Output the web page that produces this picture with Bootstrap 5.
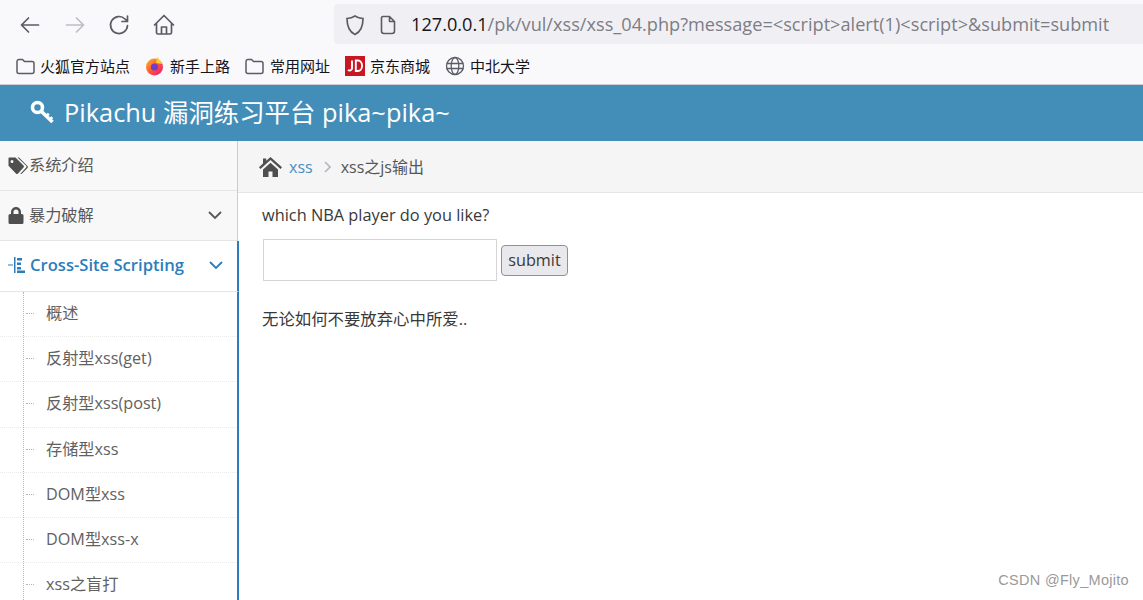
<!DOCTYPE html>
<html lang="zh">
<head>
<meta charset="utf-8">
<title>Pikachu</title>
<link href="https://cdn.jsdelivr.net/npm/bootstrap@5.3.0/dist/css/bootstrap.min.css" rel="stylesheet">
<style>
html,body{height:600px;overflow:hidden;background:#fff}
body{font-family:"Open Sans","Noto Sans CJK SC",sans-serif;font-size:16px;color:#393939;position:relative}
.chrome{background:#f9f9fb;height:85px;border-bottom:1px solid #cfcfd8}
.toolrow{height:50px;padding-left:18px}
.tbtn{width:24px;height:24px;color:#5b5b66;flex:none}
.tbtn.dim{color:#bdbdc3}
.urlbar{position:relative;margin-left:316px;background:#f0f0f4;height:40px;flex:1;border-radius:4px 0 0 4px;margin-top:-2px;padding:2px 0 0 11px;font-size:18.16px;color:#7d7d85;white-space:nowrap}
.tools{position:absolute;left:18px;top:13px;gap:20.5px}
.urlhost{color:#15141a}
.urlic{color:#5b5b66;flex:none}
.bookrow{height:34px;padding-left:16px;gap:15px;font-size:15px;color:#15141a;white-space:nowrap;margin-top:-1px}
.bookrow span.bk{gap:5px}
.bookrow span.bk-wide{gap:6px}
.bookrow span.bk-tail{margin-left:1px}
.topbar{background:#438eb9;height:56px;color:#fff;font-size:25.4px;padding:0 0 2px 30px;gap:9px;white-space:nowrap}
.mainwrap{height:459px;overflow:hidden}
.sidepane{width:238px;flex:none;background:#f2f2f2;position:relative;border-right:1px solid #ccc}
.sideitem{height:50px;border-bottom:1px solid #e5e5e5;background:#f8f8f8;color:#585858;padding:0 15px 0 8px;font-size:16.2px;white-space:nowrap}
.sideitem.openitem{background:#fff;color:#2b7dbc;font-weight:600;font-size:16.6px;margin-right:-2px;border-right:2px solid #2b7dbc;padding-right:14px;height:51px;padding-bottom:2px}
.chev{margin-left:auto;flex:none}
.sublist{background:#fff;margin-right:-2px;border-right:2px solid #2b7dbc;position:relative}
.sublist::before{content:"";position:absolute;left:23px;top:0;bottom:0;border-left:1px dotted #9dbdd6}
.subitem{height:45.2px;padding-left:46px;padding-bottom:2px;font-size:16.2px;color:#616161;border-bottom:1px dotted #eaeaea;position:relative;white-space:nowrap}
.subitem::before{content:"";position:absolute;left:26px;top:21px;width:8px;border-top:1px dotted #9dbdd6}
.contentpane{min-width:0}
.crumbs{height:52px;background:#f5f5f5;border-bottom:1px solid #e5e5e5;padding-left:21px;font-size:16px;color:#555;white-space:nowrap}
.crumbs .xsslink{color:#4c8fbd;margin-left:7px}
.crumbs .sep{color:#b2b6bf;margin:0 10px 0 11px;flex:none}
.pagebody{padding:9px 0 0 24px;color:#393939}
.pagebody p{margin:0;line-height:26px;font-size:16.35px}
.nbafield{width:234px;height:42px;border:1px solid #d5d5d5;background:#fff;margin-left:1px;padding:0}
.nbasubmit{height:31px;width:67px;margin-left:4px;padding:1px 0 0;background:#e9e9ed;border:1px solid #8f8f9d;border-radius:4px;color:#393939;font-size:16.2px;line-height:1}
.formline{margin-top:11px;align-items:center;gap:0}
.pagebody p.msgline{margin-top:25px;font-size:16.4px}
.wmark{position:absolute;right:14px;bottom:8px;font-family:"Liberation Sans",sans-serif;font-size:14.5px;color:#9a9a9a;letter-spacing:.3px}
</style>
</head>
<body>
<div class="chrome">
  <div class="d-flex align-items-center toolrow position-relative">
    <div class="d-flex align-items-center tools">
      <svg class="tbtn" viewBox="0 0 24 24" fill="none" stroke="currentColor" stroke-width="1.7" stroke-linecap="round" stroke-linejoin="round"><path d="M20.500 12H3.500M10.500 5l-7 7 7 7"/></svg>
      <svg class="tbtn dim" viewBox="0 0 24 24" fill="none" stroke="currentColor" stroke-width="1.7" stroke-linecap="round" stroke-linejoin="round"><path d="M3.500 12h17M13.500 5l7 7-7 7"/></svg>
      <svg class="tbtn" viewBox="0 0 24 24" fill="none" stroke="currentColor" stroke-width="1.7" stroke-linecap="round" stroke-linejoin="round"><path d="M20.500 12.500a8.500 8.500 0 1 1-2.500-6.500L20.500 8.500M20.500 3v5.500H15"/></svg>
      <svg class="tbtn" viewBox="0 0 24 24" fill="none" stroke="currentColor" stroke-width="1.7" stroke-linecap="round" stroke-linejoin="round"><path d="M2.500 12 12 2.500l9.500 9.500M4.500 10v9.500A1.500 1.500 0 0 0 6 21h12a1.500 1.500 0 0 0 1.500-1.500V10M9.500 21v-7h5v7"/></svg>
    </div>
    <div class="urlbar d-flex align-items-center">
      <svg class="urlic" width="20" height="22" viewBox="0 0 20 22" fill="none" stroke="currentColor" stroke-width="1.7"><path d="M10 2c2.500 1.600 5 2.300 8 2.500 0 7-1.500 13-8 16C3.500 17.500 2 11.500 2 4.500 5 4.300 7.500 3.600 10 2z"/></svg>
      <svg class="urlic" style="margin-left:15px" width="16" height="20" viewBox="0 0 16 20" fill="none" stroke="currentColor" stroke-width="1.6" stroke-linejoin="round"><path d="M3 1.500h6.500l5 5V16a2.500 2.500 0 0 1-2.500 2.500H4A2.500 2.500 0 0 1 1.500 16V3A1.500 1.500 0 0 1 3 1.500zM9.500 1.500V6.500h5"/></svg>
      <span style="margin-left:15px"><span class="urlhost">127.0.0.1</span>/pk/vul/xss/xss_04.php?message=&lt;script&gt;alert(1)&lt;script&gt;&amp;submit=submit</span>
    </div>
  </div>
  <div class="d-flex align-items-center bookrow">
    <span class="d-flex align-items-center bk">
      <svg width="19" height="17" viewBox="0 0 19 17" fill="none" stroke="#5b5b66" stroke-width="1.5"><path d="M1 3.500A2 2 0 0 1 3 1.500h3.500l2 2H16a2 2 0 0 1 2 2V13.500a2 2 0 0 1-2 2H3a2 2 0 0 1-2-2z"/></svg>火狐官方站点</span>
    <span class="d-flex align-items-center bk bk-wide">
      <svg width="19" height="20" viewBox="0 0 19 20"><defs><linearGradient id="ffx" x1="0" y1="0" x2="1" y2="1"><stop offset="0" stop-color="#ffbd2e"/><stop offset=".5" stop-color="#ff5634"/><stop offset="1" stop-color="#e31587"/></linearGradient></defs><circle cx="9.500" cy="11" r="8.500" fill="url(#ffx)"/><path d="M12 1c2 2 4 4 5 7l-6-1z" fill="#ffcb2e"/><circle cx="9.500" cy="11" r="3.600" fill="#6b3fc9"/></svg>新手上路</span>
    <span class="d-flex align-items-center bk bk-wide">
      <svg width="19" height="17" viewBox="0 0 19 17" fill="none" stroke="#5b5b66" stroke-width="1.5"><path d="M1 3.500A2 2 0 0 1 3 1.500h3.500l2 2H16a2 2 0 0 1 2 2V13.500a2 2 0 0 1-2 2H3a2 2 0 0 1-2-2z"/></svg>常用网址</span>
    <span class="d-flex align-items-center bk">
      <svg width="20" height="20" viewBox="0 0 20 20"><rect width="20" height="20" fill="#c91623"/><path d="M7 4.500V12.500a2.500 2.500 0 0 1-4 1.500M10.800 4.500V15h2.200a4 5.200 0 0 0 0-10.500z" fill="none" stroke="#fff" stroke-width="1.900"/></svg>京东商城</span>
    <span class="d-flex align-items-center bk">
      <svg width="20" height="20" viewBox="0 0 20 20" fill="none" stroke="#5b5b66" stroke-width="1.300"><circle cx="10" cy="10" r="8.500"/><ellipse cx="10" cy="10" rx="3.800" ry="8.500"/><path d="M1.500 7.500h17M1.500 12.500h17"/></svg>中北大学</span>
  </div>
</div>
<div class="topbar d-flex align-items-center">
  <svg width="25" height="25" viewBox="0 0 25 25" fill="none"><circle cx="7.500" cy="7.500" r="5" stroke="#fff" stroke-width="3.600"/><path d="M11.500 11.500 22.500 22" stroke="#fff" stroke-width="3.600"/><path d="M16 16.500l2.800-2.800M19.500 20l2.800-2.800" stroke="#fff" stroke-width="2.600"/></svg>
  <span>Pikachu 漏洞练习平台 pika~pika~</span>
</div>
<div class="d-flex mainwrap">
  <aside class="sidepane">
    <div class="sideitem d-flex align-items-center">
      <svg width="21" height="18" viewBox="0 0 21 17" fill="#4f4f4f"><path fill-rule="evenodd" d="M1 0h6.500l8 8a1.500 1.500 0 0 1 0 2.100l-5.500 6a1.500 1.500 0 0 1-2.100 0L.5 8.200V1a1 1 0 0 1 .5-1zM4 2.500a1.500 1.500 0 1 0 0 3 1.500 1.500 0 0 0 0-3z"/><path d="M9.500 0H11l8.500 8.500a1.500 1.500 0 0 1 0 2L13.500 16.500h-1.300l6-6.500a1.200 1.200 0 0 0 0-1.700z"/></svg>
      <span>系统介绍</span>
    </div>
    <div class="sideitem d-flex align-items-center">
      <svg width="16" height="17" viewBox="0 0 16 17" fill="#4f4f4f"><path d="M3 7V5a5 5 0 0 1 10 0v2h1a1.500 1.500 0 0 1 1.500 1.500v7A1.500 1.500 0 0 1 14 17H2A1.500 1.500 0 0 1 .5 15.500v-7A1.500 1.500 0 0 1 2 7zm2.500 0h5V5a2.500 2.500 0 0 0-5 0z"/></svg>
      <span style="margin-left:5px">暴力破解</span>
      <svg class="chev" width="14" height="9" viewBox="0 0 14 9" fill="none" stroke="#585858" stroke-width="1.800"><path d="M1 1l6 6 6-6"/></svg>
    </div>
    <div class="sideitem openitem d-flex align-items-center">
      <svg width="18" height="16" viewBox="0 0 18 16" fill="#2b7dbc"><path d="M0 7.500h5v1H0zM6 0h1.500v16H6zM9 1h5v2.500H9zM9 5.500h4v2.500H9zM9 10h4v2.500H9zM9 13.500h8V16H9z"/></svg>
      <span style="margin-left:4px">Cross-Site Scripting</span>
      <svg class="chev" width="14" height="9" viewBox="0 0 14 9" fill="none" stroke="#2b7dbc" stroke-width="1.800"><path d="M1 1l6 6 6-6"/></svg>
    </div>
    <div class="sublist">
      <div class="subitem d-flex align-items-center">概述</div>
      <div class="subitem d-flex align-items-center">反射型xss(get)</div>
      <div class="subitem d-flex align-items-center">反射型xss(post)</div>
      <div class="subitem d-flex align-items-center">存储型xss</div>
      <div class="subitem d-flex align-items-center">DOM型xss</div>
      <div class="subitem d-flex align-items-center">DOM型xss-x</div>
      <div class="subitem d-flex align-items-center">xss之盲打</div>
    </div>
  </aside>
  <main class="contentpane flex-grow-1">
    <div class="crumbs d-flex align-items-center">
      <svg width="23" height="20" viewBox="0 0 23 20" fill="#4f4f4f"><path d="M11.500 0 23 10.200l-1.500 1.700L11.500 3 1.500 11.900 0 10.200l4-3.600V1.500h3.200v2.300z"/><path d="M4 12.500l7.500-6.700 7.500 6.700V20h-5.500v-5.500h-4V20H4z"/></svg>
      <span class="xsslink">xss</span>
      <svg class="sep" width="7" height="12" viewBox="0 0 7 12" fill="none" stroke="currentColor" stroke-width="1.600"><path d="M1 1l5 5-5 5"/></svg>
      <span>xss之js输出</span>
    </div>
    <div class="pagebody">
      <p>which NBA player do you like?</p>
      <form class="d-flex formline" onsubmit="return false">
        <input class="nbafield" type="text" aria-label="player">
        <button class="nbasubmit" type="submit">submit</button>
      </form>
      <p class="msgline">无论如何不要放弃心中所爱..</p>
    </div>
  </main>
</div>
<div class="wmark">CSDN @Fly_Mojito</div>
<script src="https://cdn.jsdelivr.net/npm/bootstrap@5.3.0/dist/js/bootstrap.bundle.min.js"></script>
</body>
</html>
